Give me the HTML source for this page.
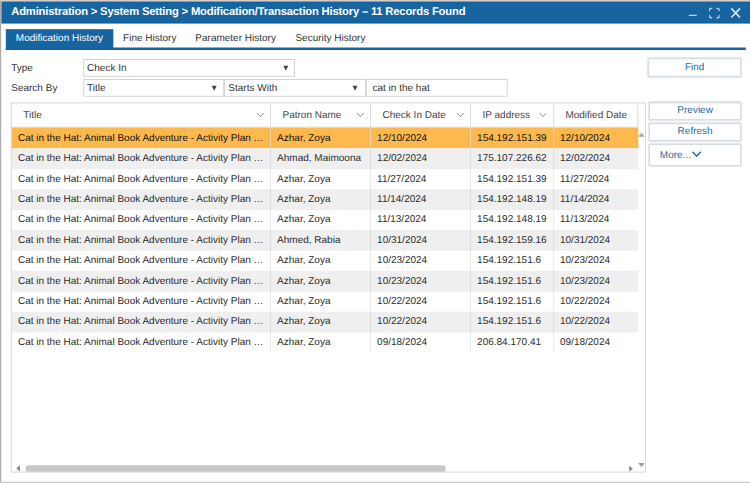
<!DOCTYPE html>
<html>
<head>
<meta charset="utf-8">
<title>Modification/Transaction History</title>
<style>
html,body{margin:0;padding:0;background:#fff;overflow:hidden;}
body{width:750px;height:483px;position:relative;}
#stage{position:absolute;left:0;top:0;width:900px;height:580px;transform:scale(0.83333);transform-origin:0 0;
  font-family:"Liberation Sans",Arial,sans-serif;font-size:12px;text-rendering:geometricPrecision;color:#333;background:#fff;overflow:hidden;}
#stage *{box-sizing:border-box;}
.abs{position:absolute;}
#bt{left:0;top:0;width:900px;height:1.35px;background:#cbc3bb;}
#bl{left:0;top:0;width:2.4px;height:580px;background:linear-gradient(to right,#acadaf 0,#acadaf 50%,#e4e8eb 50%,#e4e8eb 100%);}
#bb{left:0;top:578.3px;width:900px;height:2px;background:#c8cdcf;}
#hdr{left:1.5px;top:1.5px;width:902px;height:26.3px;background:#1765a0;border:1px solid #0e5a98;}
#title{left:13.5px;top:1.4px;height:26.5px;line-height:26px;font-weight:bold;font-size:13.5px;letter-spacing:-0.235px;color:#fff;white-space:nowrap;}
#tabs{left:7px;top:35px;width:888px;height:24.5px;border-bottom:3.4px solid #1765a0;}
.tab{position:absolute;top:0;height:24.5px;line-height:21px;padding:0 12px;white-space:nowrap;color:#333;}
.tab.on{background:#1765a0;color:#fff;}
.lbl{position:absolute;left:13.5px;height:21px;line-height:21px;}
.sel,.inp{position:absolute;height:21px;border:1px solid #ccc;background:#fff;line-height:19px;padding-left:4px;color:#333;white-space:nowrap;}
.sel i{position:absolute;right:6.8px;top:6.8px;width:0;height:0;border-left:3.7px solid transparent;border-right:3.7px solid transparent;border-top:6px solid #4a403d;}
.sel.r2 i{right:8.3px;}
.btn{position:absolute;left:777.8px;width:111.7px;height:21.5px;border:1px solid #d0d8df;background:#fff;color:#1f6aa5;text-align:center;line-height:18.6px;box-shadow:0 0 2px rgba(110,130,150,.6);}
#grid{left:13px;top:123.2px;width:762px;height:444px;border:1px solid #d0d0d0;background:#fff;overflow:hidden;}
.hc{position:absolute;top:0;height:29px;line-height:29.4px;padding-left:14px;border-right:1px solid #d2d2d2;border-bottom:1px solid #e2e2e2;color:#444;white-space:nowrap;overflow:hidden;}
.hc svg{position:absolute;right:7.3px;top:10.6px;}
.row{position:absolute;left:0;width:751.5px;height:24.5px;}
.row span{position:absolute;top:0;height:24.5px;line-height:23.5px;padding-left:7.5px;white-space:nowrap;overflow:hidden;color:#2b2b2b;border-right:1px solid rgba(160,160,160,.28);}
.row.dn span{line-height:24.4px;}
.row.alt{background:#efefef;}
.row.selr{background:#fdb94e;}
.row.selr span{border-right-color:rgba(224,224,224,.8);color:#111;}
.c1{left:0;width:311px;}
.c2{left:311px;width:120px;}
.c3{left:431px;width:120px;}
.c4{left:551px;width:99.5px;}
.c5{left:650.5px;width:101px;border-right:none !important;}
</style>
</head>
<body>
<div id="stage">
  <div class="abs" id="bl"></div>
  <div class="abs" id="hdr"></div>
  <div class="abs" id="bt"></div>
  <div class="abs" id="bb"></div>
  <div class="abs" id="title">Administration &gt; System Setting &gt; Modification/Transaction History &ndash; 11 Records Found</div>
  <svg class="abs" style="left:824px;top:6px" width="70" height="20" viewBox="0 0 70 20">
    <g fill="none" stroke="#c4d6e7" stroke-width="1.5">
      <path d="M2.5 12.6 H12"/>
      <path d="M27.5 7.2 V5.6 Q27.5 4 29.1 4 H30.7 M35.7 4 H37.3 Q38.9 4 38.9 5.6 V7.2 M38.9 12.2 V13.8 Q38.9 15.4 37.3 15.4 H35.7 M30.7 15.4 H29.1 Q27.5 15.4 27.5 13.8 V12.2"/>
      <path d="M53.6 4 L64 15 M64 4 L53.6 15" stroke="#d3e2ef" stroke-width="2.1"/>
    </g>
  </svg>

  <div class="abs" id="tabs">
    <div class="tab on" style="left:0">Modification History</div>
    <div class="tab" style="left:128.7px">Fine History</div>
    <div class="tab" style="left:215.4px">Parameter History</div>
    <div class="tab" style="left:335.5px">Security History</div>
  </div>

  <div class="lbl" style="top:71px">Type</div>
  <div class="lbl" style="top:95px">Search By</div>
  <div class="sel" style="left:99.5px;top:71px;width:254.5px">Check In<i></i></div>
  <div class="sel r2" style="left:99.5px;top:95px;width:169.7px">Title<i></i></div>
  <div class="sel r2" style="left:269px;top:95px;width:169.7px">Starts With<i></i></div>
  <div class="inp" style="left:438.5px;top:95px;width:170.3px;padding-left:7.5px">cat in the hat</div>

  <div class="btn" style="top:70.2px">Find</div>
  <div class="btn" style="left:778.8px;width:110.7px;top:122.5px;line-height:17.4px">Preview</div>
  <div class="btn" style="left:778.8px;width:110.7px;top:147.5px;line-height:17.4px">Refresh</div>
  <div class="btn" style="left:778.8px;width:110.7px;top:172.5px;height:26px;text-align:left;padding-left:12px;line-height:24.6px">More...<svg style="position:absolute;left:50.6px;top:7px" width="12" height="8" viewBox="0 0 12 8"><path d="M1 1 L6 6.4 L11 1" fill="none" stroke="#1f6aa5" stroke-width="1.7"/></svg></div>

  <div class="abs" id="grid">
    <div class="hc" style="left:0;width:311px">Title<svg width="9" height="6" viewBox="0 0 9 6"><path d="M.6 .8 L4.5 4.9 L8.4 .8" fill="none" stroke="#858585" stroke-width="1.15"/></svg></div>
    <div class="hc" style="left:311px;width:120px">Patron Name<svg width="9" height="6" viewBox="0 0 9 6"><path d="M.6 .8 L4.5 4.9 L8.4 .8" fill="none" stroke="#858585" stroke-width="1.15"/></svg></div>
    <div class="hc" style="left:431px;width:120px">Check In Date<svg width="9" height="6" viewBox="0 0 9 6"><path d="M.6 .8 L4.5 4.9 L8.4 .8" fill="none" stroke="#858585" stroke-width="1.15"/></svg></div>
    <div class="hc" style="left:551px;width:99.5px">IP address<svg width="9" height="6" viewBox="0 0 9 6"><path d="M.6 .8 L4.5 4.9 L8.4 .8" fill="none" stroke="#858585" stroke-width="1.15"/></svg></div>
    <div class="hc" style="left:650.5px;width:101.5px">Modified Date</div>

    <div class="row selr dn" style="top:28.9px;height:25.1px"><span class="c1">Cat in the Hat: Animal Book Adventure - Activity Plan &hellip;</span><span class="c2">Azhar, Zoya</span><span class="c3">12/10/2024</span><span class="c4">154.192.151.39</span><span class="c5">12/10/2024</span></div>
    <div class="row alt" style="top:54px"><span class="c1">Cat in the Hat: Animal Book Adventure - Activity Plan &hellip;</span><span class="c2">Ahmad, Maimoona</span><span class="c3">12/02/2024</span><span class="c4">175.107.226.62</span><span class="c5">12/02/2024</span></div>
    <div class="row" style="top:78.5px"><span class="c1">Cat in the Hat: Animal Book Adventure - Activity Plan &hellip;</span><span class="c2">Azhar, Zoya</span><span class="c3">11/27/2024</span><span class="c4">154.192.151.39</span><span class="c5">11/27/2024</span></div>
    <div class="row alt" style="top:103px"><span class="c1">Cat in the Hat: Animal Book Adventure - Activity Plan &hellip;</span><span class="c2">Azhar, Zoya</span><span class="c3">11/14/2024</span><span class="c4">154.192.148.19</span><span class="c5">11/14/2024</span></div>
    <div class="row" style="top:127.5px"><span class="c1">Cat in the Hat: Animal Book Adventure - Activity Plan &hellip;</span><span class="c2">Azhar, Zoya</span><span class="c3">11/13/2024</span><span class="c4">154.192.148.19</span><span class="c5">11/13/2024</span></div>
    <div class="row alt dn" style="top:152px"><span class="c1">Cat in the Hat: Animal Book Adventure - Activity Plan &hellip;</span><span class="c2">Ahmed, Rabia</span><span class="c3">10/31/2024</span><span class="c4">154.192.159.16</span><span class="c5">10/31/2024</span></div>
    <div class="row" style="top:176.5px"><span class="c1">Cat in the Hat: Animal Book Adventure - Activity Plan &hellip;</span><span class="c2">Azhar, Zoya</span><span class="c3">10/23/2024</span><span class="c4">154.192.151.6</span><span class="c5">10/23/2024</span></div>
    <div class="row alt dn" style="top:201px"><span class="c1">Cat in the Hat: Animal Book Adventure - Activity Plan &hellip;</span><span class="c2">Azhar, Zoya</span><span class="c3">10/23/2024</span><span class="c4">154.192.151.6</span><span class="c5">10/23/2024</span></div>
    <div class="row" style="top:225.5px"><span class="c1">Cat in the Hat: Animal Book Adventure - Activity Plan &hellip;</span><span class="c2">Azhar, Zoya</span><span class="c3">10/22/2024</span><span class="c4">154.192.151.6</span><span class="c5">10/22/2024</span></div>
    <div class="row alt" style="top:250px"><span class="c1">Cat in the Hat: Animal Book Adventure - Activity Plan &hellip;</span><span class="c2">Azhar, Zoya</span><span class="c3">10/22/2024</span><span class="c4">154.192.151.6</span><span class="c5">10/22/2024</span></div>
    <div class="row" style="top:274.5px"><span class="c1">Cat in the Hat: Animal Book Adventure - Activity Plan &hellip;</span><span class="c2">Azhar, Zoya</span><span class="c3">09/18/2024</span><span class="c4">206.84.170.41</span><span class="c5">09/18/2024</span></div>

    <!-- scrollbars -->
    <svg class="abs" style="left:0;top:0" width="760" height="444" viewBox="0 0 760 444">
      <path d="M751.8 40 l4 -4.8 l4 4.8 z" fill="#a9a9a9"/>
      <path d="M751.6 431.6 l4.1 4.8 l4.1 -4.8 z" fill="#a0a0a0"/>
      <path d="M10 434.2 l-4.5 3.8 l4.5 3.8 z" fill="#8a8a8a"/>
      <path d="M741 434.6 l4.3 3.8 l-4.3 3.8 z" fill="#8a8a8a"/>
      <rect x="16.5" y="434.4" width="504.5" height="8.4" rx="4.2" fill="#c8c8c8"/>
    </svg>
  </div>
</div>
</body>
</html>
